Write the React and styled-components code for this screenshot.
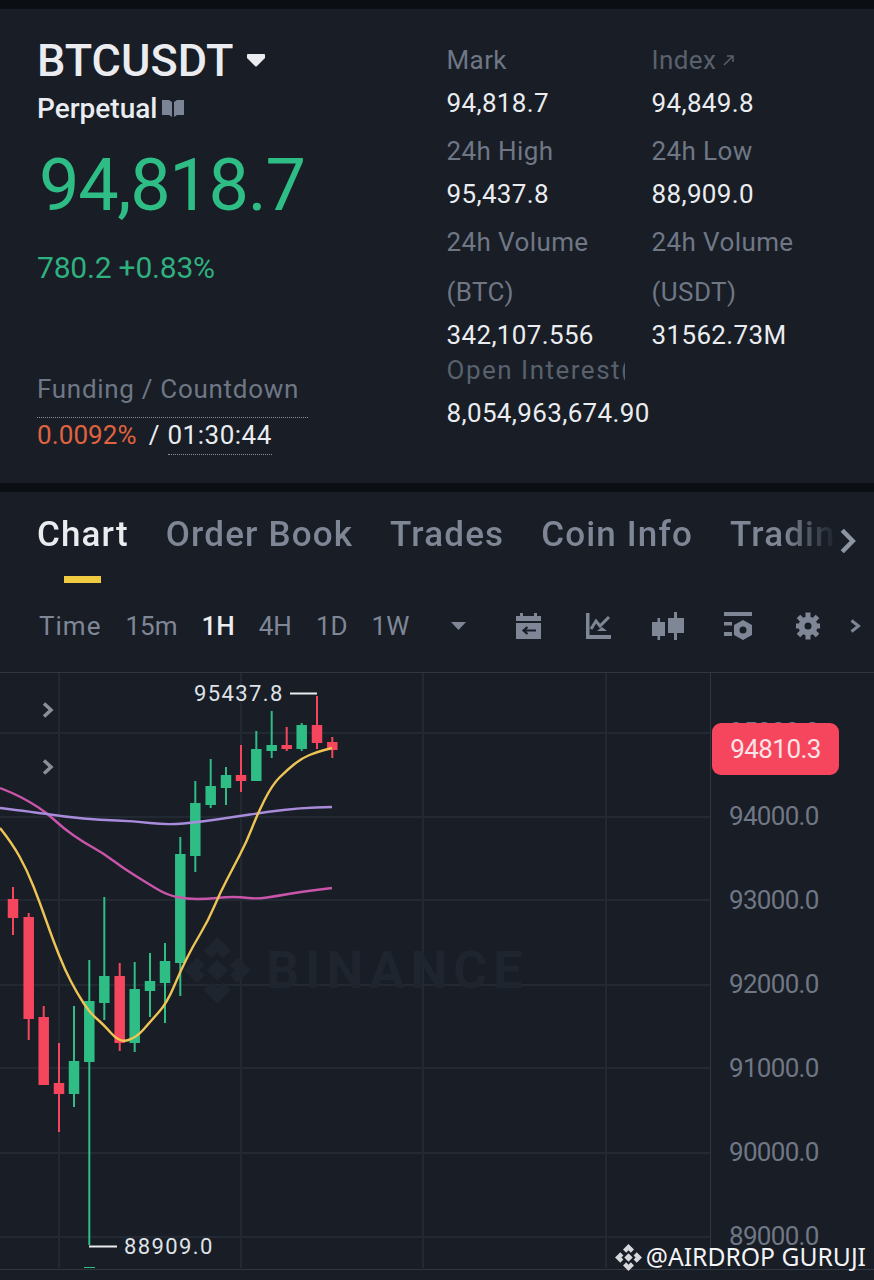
import React from "react";
import styled, { createGlobalStyle } from "styled-components";

const BG = "#181d26";
const GREEN = "#2ebd85";
const RED = "#f6465d";
const MUTED = "#6f7785";
const ICON = "#7f8796";
const GRID = "#232932";
const LINE = "#303640";

const Global = createGlobalStyle`
  html, body { margin: 0; padding: 0; background: #0b0e12; }
  body { font-family: Roboto, "Noto Sans", sans-serif; }
`;

const Page = styled.div`
	width: 874px;
	height: 1280px;
	padding-top: 9px;
	box-sizing: border-box;
	display: flex;
	flex-direction: column;
	gap: 9px;
	overflow: hidden;
	position: relative;
`;

const Ticker = styled.section`
	height: 474px;
	flex: none;
	background: ${BG};
	padding-left: 37px;
	display: grid;
	grid-template-columns: 409.5px 1fr;
`;

const Summary = styled.div`
	display: flex;
	flex-direction: column;
	padding-bottom: 28px;
`;

const Title = styled.div`
	margin-top: 27px;
	display: flex;
	align-items: center;
	gap: 14px;
	height: 48px;
	font-size: 45px;
	font-weight: 500;
	color: #eaecef;
`;

const Subtitle = styled.div`
	display: flex;
	align-items: center;
	gap: 5px;
	height: 48px;
	font-size: 28px;
	font-weight: 500;
	color: #eaecef;
`;

const Price = styled.div`
	margin-top: 14px;
	line-height: 80px;
	font-size: 72px;
	letter-spacing: -1.3px;
	color: ${GREEN};
	padding-left: 2px;
`;

const Change = styled.div`
	margin-top: 22px;
	line-height: 40px;
	font-size: 30px;
	letter-spacing: -0.2px;
	color: #2fb07f;
`;

const Funding = styled.div`
	margin-top: auto;
	width: 271px;
`;

const FundingLabel = styled.div`
	line-height: 36px;
	padding-bottom: 10px;
	font-size: 26px;
	letter-spacing: 0.7px;
	color: ${MUTED};
	border-bottom: 1px dotted #8b919c;
`;

const FundingValue = styled.div`
	display: flex;
	gap: 12px;
	height: 37px;
	line-height: 34px;
	font-size: 26px;
	letter-spacing: 0.1px;
	color: #eaecef;
`;

const Rate = styled.span`
	color: #e0633f;
`;

const Countdown = styled.span`
	border-bottom: 1px dotted #8b919c;
	letter-spacing: 0.5px;
	margin-left: -4px;
`;

const Stats = styled.div`
	padding-top: 26px;
	display: grid;
	grid-template-columns: 205px 1fr;
	align-content: start;
	row-gap: 5px;
`;

const Stat = styled.div`
	grid-column: ${(p) => (p.$wide ? "1 / -1" : "auto")};
	margin-top: ${(p) => (p.$wide ? "-13px" : "0")};
`;

const StatLabel = styled.div`
	line-height: 50px;
	font-size: 26px;
	letter-spacing: ${(p) => (p.$clip ? "1.5px" : "0.4px")};
	color: ${(p) => (p.$dim ? "#59616d" : MUTED)};
	width: ${(p) => (p.$clip ? "178px" : "auto")};
	white-space: nowrap;
	overflow: hidden;
	display: flex;
	align-items: center;
	gap: 7px;
`;

const StatValue = styled.div`
	line-height: 36px;
	font-size: 26px;
	letter-spacing: 0.35px;
	color: #eaecef;
	white-space: nowrap;
`;

const Market = styled.section`
	flex: 1;
	background: ${BG};
	display: flex;
	flex-direction: column;
	min-height: 0;
`;

const TabBar = styled.div`
	position: relative;
	height: 91px;
	flex: none;
`;

const TabScroll = styled.div`
	display: flex;
	gap: 37px;
	padding-left: 37px;
	overflow: hidden;
	mask-image: linear-gradient(to right, #000 785px, transparent 838px);
`;

const Tab = styled.div`
	display: flex;
	flex-direction: column;
	align-items: center;
	flex: none;
	height: 91px;
	box-sizing: border-box;
	padding-top: 2px;
	line-height: 82px;
	font-size: 35px;
	letter-spacing: 1.15px;
	font-weight: 500;
	color: ${(p) => (p.$active ? "#eaecef" : ICON)};
`;

const TabMark = styled.div`
	width: 37px;
	height: 7px;
	background: #f0cb41;
`;

const TabNext = styled.div`
	position: absolute;
	right: 18px;
	top: 36px;
	display: flex;
`;

const TimeBar = styled.div`
	height: 89px;
	flex: none;
	display: flex;
	align-items: center;
	padding: 0 0 3px 39px;
	box-sizing: border-box;
`;

const Intervals = styled.div`
	width: 384px;
	display: flex;
	gap: 24px;
`;

const Interval = styled.span`
	font-size: 26px;
	letter-spacing: ${(p) => (p.$wide ? "1px" : "0")};
	font-weight: ${(p) => (p.$active ? 500 : 400)};
	color: ${(p) => (p.$active ? "#eaecef" : ICON)};
`;

const ToolCell = styled.div`
	width: 70px;
	flex: none;
	display: flex;
	justify-content: center;
	align-items: center;
`;

const MoreCell = styled.div`
	margin-left: 6px;
	display: flex;
`;

const ChartArea = styled.div`
	height: 596px;
	flex: none;
	display: flex;
	border-top: 1px solid ${LINE};
	border-bottom: 1px solid ${LINE};
	position: relative;
`;

const Plot = styled.svg`
	width: 710px;
	height: 595px;
	flex: none;
	display: block;
`;

const Axis = styled.div`
	flex: 1;
	border-left: 1px solid ${LINE};
	padding: 17px 0 0 18px;
	overflow: hidden;
`;

const AxisLabel = styled.div`
	height: 84px;
	line-height: 84px;
	font-size: 26px;
	letter-spacing: -0.7px;
	color: ${MUTED};
`;

const LastPrice = styled.div`
	position: absolute;
	left: 712px;
	top: 50px;
	width: 127px;
	height: 52px;
	border-radius: 9px;
	background: ${RED};
	color: #fbe4e7;
	font-size: 26px;
	letter-spacing: -0.6px;
	display: flex;
	align-items: center;
	justify-content: center;
`;

const Credit = styled.div`
	position: absolute;
	right: 8px;
	bottom: 8px;
	display: flex;
	align-items: center;
	gap: 4px;
	font-family: "Noto Sans", sans-serif;
	font-size: 24.7px;
	line-height: 30px;
	color: #f2f3f5;
`;

const candles = [
	[13, 887, 935, 899, 918, 0],
	[28.7, 913, 1040, 917, 1019, 0],
	[43.7, 1006, 1085, 1017, 1085, 0],
	[59, 1043, 1132, 1083, 1094, 0],
	[74, 1006, 1107, 1061, 1094, 1],
	[89.3, 960, 1245, 1001, 1062, 1],
	[104.3, 897, 1020, 976, 1003, 1],
	[119.7, 963, 1051, 976, 1043, 0],
	[134.7, 962, 1052, 989, 1043, 1],
	[150, 953, 1017, 981, 991, 1],
	[165, 943, 1023, 961, 983, 1],
	[180.3, 837, 996, 854, 963, 1],
	[195.3, 781, 872, 803, 856, 1],
	[210.7, 759, 808, 786, 805, 1],
	[226, 767, 805, 775, 788, 1],
	[241, 745, 792, 775, 781, 0],
	[256.3, 731, 781, 749, 781, 1],
	[271.7, 711, 758, 745, 751, 1],
	[286.7, 727, 751, 745, 749, 0],
	[301.7, 723, 751, 725, 749, 1],
	[317, 696, 749, 725, 743, 0],
	[332.3, 737, 758, 742, 750, 0],
];

const yellow = [
	[0, 828], [12, 843], [27, 870], [40, 903], [53, 940], [65, 970], [77, 993], [90, 1013],
	[103, 1024], [120, 1043], [137, 1037], [150, 1022], [167, 1003], [180, 972], [193, 946],
	[208, 921], [220, 893], [233, 868], [247, 841], [257, 815], [272, 785], [287, 770],
	[302, 758], [317, 752], [332, 748],
];
const purple = [
	[0, 808], [33, 812], [67, 817], [100, 820], [133, 821], [167, 825], [200, 822], [233, 817],
	[267, 812], [300, 808], [332, 807],
];
const magenta = [
	[0, 788], [13, 793], [30, 802], [47, 813], [63, 828], [83, 842], [103, 853], [123, 868],
	[147, 883], [167, 895], [187, 899], [207, 899], [227, 897], [240, 897], [257, 899],
	[277, 896], [300, 892], [332, 888],
];

// rounds the corners with quadratic segments through the midpoints
const smooth = (p) => {
	let d = `M${p[0][0]} ${p[0][1]}`;
	for (let i = 1; i < p.length - 1; i++) {
		const mx = (p[i][0] + p[i + 1][0]) / 2;
		const my = (p[i][1] + p[i + 1][1]) / 2;
		d += `Q${p[i][0]} ${p[i][1]} ${mx} ${my}`;
	}
	const last = p[p.length - 1];
	return `${d}L${last[0]} ${last[1]}`;
};

const LOGO =
	"M32 0L45 13 37.500 20.500 32 15 26.500 20.500 19 13zM51.500 19.500L64 32 51.500 44.500 44 37 49 32 44 27zM12.500 19.500L20 27 15 32 20 37 12.500 44.500 0 32zM32 22L42 32 32 42 22 32zM19 51L26.500 43.500 32 49 37.500 43.500 45 51 32 64z";

const Chevron = ({ w, h, sw, color = ICON }) => (
	<svg width={w} height={h} viewBox={`0 0 ${w} ${h}`} fill="none">
		<path
			d={`M${sw / 2 + 1} ${sw / 2}L${w - sw / 2 - 1} ${h / 2}L${sw / 2 + 1} ${h - sw / 2}`}
			stroke={color}
			strokeWidth={sw}
		/>
	</svg>
);

const Book = () => (
	<svg width="22" height="19" viewBox="0 0 22 19" fill="#7c8596">
		<path d="M0 1h7l3 2v15l-3-2H0zM22 1h-7l-3 2v15l3-2h7z" />
	</svg>
);

const Calendar = () => (
	<svg width="25" height="26" viewBox="0 0 25 26" fill={ICON}>
		<path d="M4 0h3v4H4zM18 0h3v4h-3zM0 3h25v5H0zM0 10h25v16H0z" />
		<path d="M20 17.500H8M11.500 14l-4 3.500 4 3.500" stroke={BG} strokeWidth="2.200" fill="none" />
	</svg>
);

const Indicators = () => (
	<svg width="25" height="26" viewBox="0 0 25 26" fill={ICON}>
		<path d="M0 0h3.500v22H25v4H0z" />
		<path d="M5 16l5-8 4 5 9-9" stroke={ICON} strokeWidth="3" fill="none" />
		<path d="M11 18l5-4 5 4z" />
	</svg>
);

const Candles = () => (
	<svg width="32" height="28" viewBox="0 0 32 28" fill={ICON}>
		<path d="M5.500 6h2.500v4h5v14H8v4H5.500v-4H0V10h5.500zM22 0h3v6h7v15h-7v7h-3v-7h-6V6h6z" />
	</svg>
);

const Template = () => (
	<svg width="29" height="28" viewBox="0 0 29 28" fill={ICON}>
		<path d="M0 0h28v4H0zM0 10h8v3.500H0zM0 20h8v4H0z" />
		<path
			fillRule="evenodd"
			d="M19 8l9 5v10l-9 5-9-5V13zM19 14.500a3.500 3.500 0 100 7 3.500 3.500 0 000-7z"
		/>
	</svg>
);

const Gear = () => (
	<svg width="24" height="28" viewBox="-12 -14 24 28" fill="none" stroke={ICON}>
		<circle r="6.500" strokeWidth="6" />
		{[0, 45, 90, 135].map((a) => (
			<path key={a} d="M0 -13.500V13.500" strokeWidth="5" transform={`rotate(${a})`} />
		))}
		<circle r="3.500" fill={BG} stroke="none" />
	</svg>
);

export default function App() {
	return (
		<Page>
			<Global />
			<Ticker>
				<Summary>
					<Title>
						BTCUSDT
						<svg width="18" height="14" viewBox="0 0 18 14" fill="#eaecef">
							<path d="M1 1h16q1 0 1 1v3L10 13q-1 1-2 0L0 5V2q0-1 1-1z" />
						</svg>
					</Title>
					<Subtitle>
						Perpetual
						<Book />
					</Subtitle>
					<Price>94,818.7</Price>
					<Change>780.2 +0.83%</Change>
					<Funding>
						<FundingLabel>Funding / Countdown</FundingLabel>
						<FundingValue>
							<Rate>0.0092%</Rate>
							<span>/</span>
							<Countdown>01:30:44</Countdown>
						</FundingValue>
					</Funding>
				</Summary>
				<Stats>
					<Stat>
						<StatLabel>Mark</StatLabel>
						<StatValue>94,818.7</StatValue>
					</Stat>
					<Stat>
						<StatLabel $dim>
							Index
							<svg width="12" height="12" viewBox="0 0 12 12" fill="none" stroke="#59616d" strokeWidth="1.500">
								<path d="M1 11L10 2M4 2h6v6" />
							</svg>
						</StatLabel>
						<StatValue>94,849.8</StatValue>
					</Stat>
					<Stat>
						<StatLabel>24h High</StatLabel>
						<StatValue>95,437.8</StatValue>
					</Stat>
					<Stat>
						<StatLabel>24h Low</StatLabel>
						<StatValue>88,909.0</StatValue>
					</Stat>
					<Stat>
						<StatLabel>24h Volume</StatLabel>
						<StatLabel>(BTC)</StatLabel>
						<StatValue>342,107.556</StatValue>
					</Stat>
					<Stat>
						<StatLabel>24h Volume</StatLabel>
						<StatLabel>(USDT)</StatLabel>
						<StatValue>31562.73M</StatValue>
					</Stat>
					<Stat $wide>
						<StatLabel $dim $clip>Open Interest(</StatLabel>
						<StatValue>8,054,963,674.90</StatValue>
					</Stat>
				</Stats>
			</Ticker>

			<Market>
				<TabBar>
					<TabScroll>
						<Tab $active>
							Chart
							<TabMark />
						</Tab>
						<Tab>Order Book</Tab>
						<Tab>Trades</Tab>
						<Tab>Coin Info</Tab>
						<Tab>Trading</Tab>
					</TabScroll>
					<TabNext>
						<Chevron w={17} h={26} sw={4.500} color="#8f96a3" />
					</TabNext>
				</TabBar>

				<TimeBar>
					<Intervals>
						<Interval $wide>Time</Interval>
						<Interval>15m</Interval>
						<Interval $active>1H</Interval>
						<Interval>4H</Interval>
						<Interval>1D</Interval>
						<Interval>1W</Interval>
					</Intervals>
					<ToolCell>
						<svg width="15" height="8" viewBox="0 0 15 8" fill={ICON}>
							<path d="M0 0h15L7.500 8z" />
						</svg>
					</ToolCell>
					<ToolCell><Calendar /></ToolCell>
					<ToolCell><Indicators /></ToolCell>
					<ToolCell><Candles /></ToolCell>
					<ToolCell><Template /></ToolCell>
					<ToolCell><Gear /></ToolCell>
					<MoreCell>
						<Chevron w={12} h={14} sw={3} />
					</MoreCell>
				</TimeBar>

				<ChartArea>
					<Plot viewBox="0 673 710 595">
						<g stroke={GRID} strokeWidth="2">
							{[733, 817, 900, 985, 1068, 1153, 1237].map((y) => (
								<path key={y} d={`M0 ${y}H710`} />
							))}
							{[59, 241, 423, 606].map((x) => (
								<path key={x} d={`M${x} 673V1268`} />
							))}
						</g>

						<g fill="#1f252e" stroke="none">
							<path transform="translate(184 937) scale(1.040)" d={LOGO} />
							<text x="266" y="988" fontSize="52" fontWeight="700" letterSpacing="6" fontFamily="Roboto, sans-serif">
								BINANCE
							</text>
						</g>

						{candles.map(([x, hi, lo, top, bottom, up]) => (
							<g key={x} fill={up ? GREEN : RED}>
								<rect x={x - 1} y={hi} width="2" height={lo - hi} />
								<rect x={x - 5.250} y={top} width="10.500" height={bottom - top} />
							</g>
						))}
						<rect x="84" y="1267" width="11" height="1" fill={GREEN} />

						<g fill="none" strokeWidth="2.400" strokeLinejoin="round">
							<path d={smooth(magenta)} stroke="#c955ab" />
							<path d={smooth(purple)} stroke="#a98bdc" />
							<path d={smooth(yellow)} stroke="#eec454" />
						</g>

						<path d="M290 693.500H317" stroke="#eaecef" strokeWidth="2" />
						<path d="M89 1246.500H117" stroke="#eaecef" strokeWidth="2" />
						<g fill="#dfe2e7" fontSize="22" letterSpacing="1.400" fontFamily="Roboto, sans-serif">
							<text x="194" y="701">95437.8</text>
							<text x="124" y="1254">88909.0</text>
						</g>

						<g fill="none" stroke="#8a8f98" strokeWidth="3.500">
							<path d="M44 703.500L51 710 44 716.500" />
							<path d="M44 760.500L51 767 44 773.500" />
						</g>
					</Plot>
					<Axis>
						<AxisLabel>95000.0</AxisLabel>
						<AxisLabel>94000.0</AxisLabel>
						<AxisLabel>93000.0</AxisLabel>
						<AxisLabel>92000.0</AxisLabel>
						<AxisLabel>91000.0</AxisLabel>
						<AxisLabel>90000.0</AxisLabel>
						<AxisLabel>89000.0</AxisLabel>
					</Axis>
					<LastPrice>94810.3</LastPrice>
				</ChartArea>
			</Market>

			<Credit>
				<svg width="27" height="27" viewBox="0 0 64 64" fill="#d6d8dc">
					<path d={LOGO} />
				</svg>
				@AIRDROP GURUJI
			</Credit>
		</Page>
	);
}
